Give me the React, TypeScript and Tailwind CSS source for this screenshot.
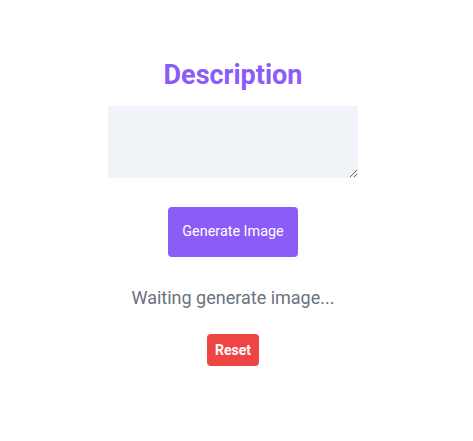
import { useState } from "react";

const App = () => {
  const [description, setDescription] = useState("");

  return (
    <div className="min-h-screen bg-white flex flex-col items-center pt-[58px] pr-[7px] font-['Roboto',sans-serif]">
      <h1 className="text-[27px] font-bold text-[#8b5cf6] leading-[34px]">Description</h1>
      <textarea
        value={description}
        onChange={(e) => setDescription(e.target.value)}
        className="mt-[14px] w-[250px] h-[72px] bg-[#f0f4f8] outline-none p-2 text-sm"
      />
      <button className="mt-[29px] w-[130px] h-[50px] rounded bg-[#8b5cf6] text-white text-[14.4px]">
        Generate Image
      </button>
      <p className="mt-[29px] text-lg text-[#6b7280] leading-[24px]">Waiting generate image...</p>
      <button
        onClick={() => setDescription("")}
        className="mt-[24px] w-[52px] h-[32px] rounded bg-[#ef4444] text-white text-sm font-bold"
      >
        Reset
      </button>
    </div>
  );
};

export default App;
